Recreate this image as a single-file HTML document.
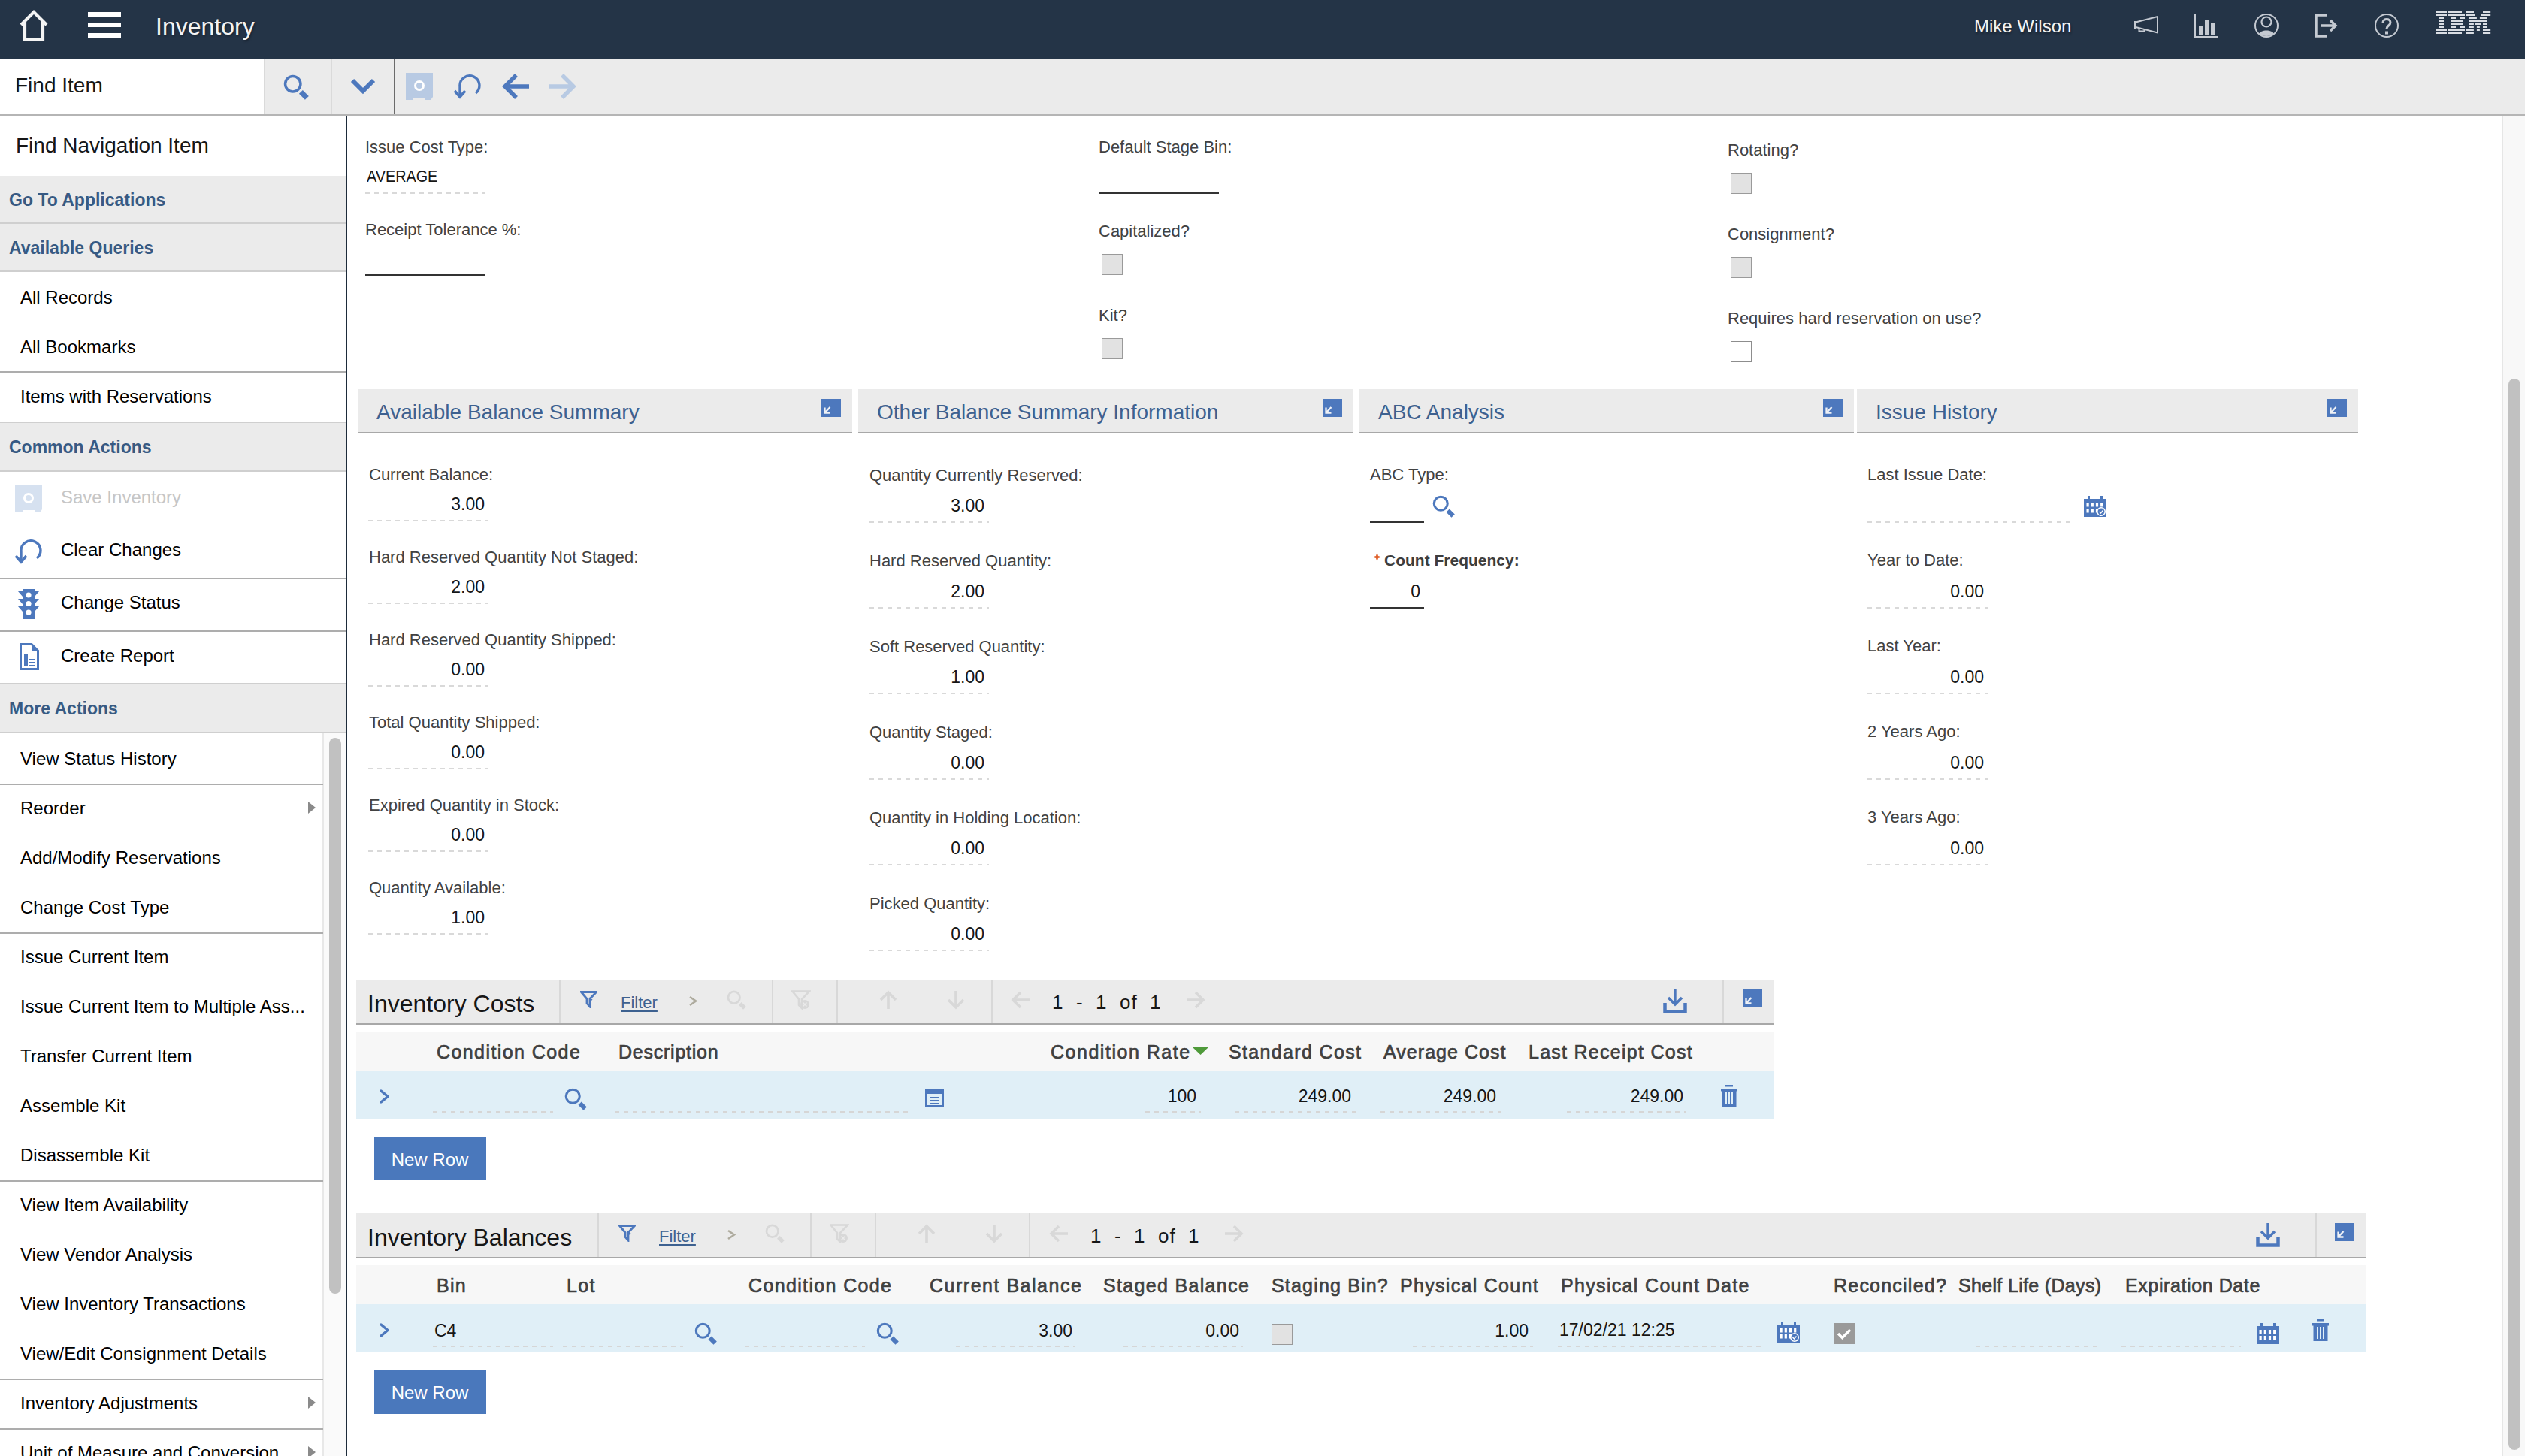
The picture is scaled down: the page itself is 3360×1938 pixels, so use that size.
<!DOCTYPE html>
<html><head><meta charset="utf-8"><title>Inventory</title>
<style>
html,body{margin:0;padding:0;}
body{width:3360px;height:1938px;overflow:hidden;position:relative;background:#fff;font-family:'Liberation Sans', sans-serif;}
.t{position:absolute;white-space:nowrap;font-family:'Liberation Sans', sans-serif;}
.r{position:absolute;display:block;box-sizing:content-box;}
</style></head><body>
<div class="r" style="left:0px;top:0px;width:3360px;height:78px;background:#243447;"></div>
<svg class="r" style="left:24px;top:12px" width="42" height="44" viewBox="0 0 42 44"><path d="M4 21 L21 4 L38 21 M9 17 V40 H33 V17" fill="none" stroke="#f4f4f4" stroke-width="4.2" stroke-linejoin="miter"/></svg>
<div class="r" style="left:117px;top:16px;width:44px;height:6px;background:#fff;"></div>
<div class="r" style="left:117px;top:30px;width:44px;height:6px;background:#fff;"></div>
<div class="r" style="left:117px;top:44px;width:44px;height:6px;background:#fff;"></div>
<div class="t" style="top:19px;font-size:32px;line-height:32px;color:#f4f4f4;left:207px;text-shadow:1px 2px 3px rgba(0,0,0,.35);">Inventory</div>
<div class="t" style="top:23px;font-size:24px;line-height:24px;color:#f4f4f4;left:2627px;text-shadow:1px 2px 3px rgba(0,0,0,.35);">Mike Wilson</div>
<svg class="r" style="left:2840px;top:18px" width="32" height="32" viewBox="0 0 32 32"><path d="M2 11.5 L31 4 V25.5 L2 18 Z" fill="none" stroke="#c5cad2" stroke-width="2"/><path d="M1.5 10 V20" stroke="#c5cad2" stroke-width="3"/><path d="M6.5 19 V23.5 H13.5 V21" fill="none" stroke="#c5cad2" stroke-width="2"/></svg>
<svg class="r" style="left:2920px;top:18px" width="32" height="32" viewBox="0 0 32 32"><path d="M1 0 V31 H32" fill="none" stroke="#c5cad2" stroke-width="2"/><rect x="6" y="16" width="6" height="12" fill="#c5cad2"/><rect x="14" y="8" width="6" height="20" fill="#c5cad2"/><rect x="22" y="12" width="6" height="16" fill="#c5cad2"/></svg>
<svg class="r" style="left:3000px;top:18px" width="32" height="32" viewBox="0 0 32 32"><circle cx="16" cy="16" r="15" fill="none" stroke="#c5cad2" stroke-width="2"/><circle cx="16" cy="11" r="6.5" fill="none" stroke="#c5cad2" stroke-width="2.2"/><path d="M6 27 C8 21 24 21 26 27 C22 31 10 31 6 27Z" fill="#c5cad2"/></svg>
<svg class="r" style="left:3080px;top:18px" width="32" height="32" viewBox="0 0 32 32"><path d="M16 2 H2 V30 H16" fill="none" stroke="#c5cad2" stroke-width="3.5"/><path d="M8 16 H28 M21 9 L28 16 L21 23" fill="none" stroke="#c5cad2" stroke-width="3.5"/></svg>
<svg class="r" style="left:3160px;top:18px" width="32" height="32" viewBox="0 0 32 32"><circle cx="16" cy="16" r="15" fill="none" stroke="#c5cad2" stroke-width="2"/><path d="M11 12 C11 6 21 6 21 12 C21 16 16 16 16 20 V21" fill="none" stroke="#c5cad2" stroke-width="3"/><rect x="14" y="23.5" width="4" height="4" fill="#c5cad2"/></svg>
<svg class="r" style="left:3236px;top:10px" width="84" height="40" viewBox="0 0 84 40"><rect x="6" y="4.8" width="14.0" height="2.2" fill="#d9dde3"/><rect x="22" y="4.8" width="18.0" height="2.2" fill="#d9dde3"/><rect x="45.8" y="4.8" width="10.2" height="2.2" fill="#d9dde3"/><rect x="68" y="4.8" width="10.2" height="2.2" fill="#d9dde3"/><rect x="6" y="8.8" width="14.0" height="2.2" fill="#d9dde3"/><rect x="22" y="8.8" width="22.0" height="2.2" fill="#d9dde3"/><rect x="45.8" y="8.8" width="12.1" height="2.2" fill="#d9dde3"/><rect x="65.9" y="8.8" width="12.3" height="2.2" fill="#d9dde3"/><rect x="9.9" y="12.8" width="6.1" height="2.2" fill="#d9dde3"/><rect x="25.9" y="12.8" width="6.1" height="2.2" fill="#d9dde3"/><rect x="38" y="12.8" width="6.0" height="2.2" fill="#d9dde3"/><rect x="49.9" y="12.8" width="10.0" height="2.2" fill="#d9dde3"/><rect x="63.9" y="12.8" width="10.0" height="2.2" fill="#d9dde3"/><rect x="9.9" y="16.8" width="6.1" height="2.2" fill="#d9dde3"/><rect x="25.9" y="16.8" width="16.0" height="2.2" fill="#d9dde3"/><rect x="49.9" y="16.8" width="24.0" height="2.2" fill="#d9dde3"/><rect x="9.9" y="20.8" width="6.1" height="2.2" fill="#d9dde3"/><rect x="25.9" y="20.8" width="16.0" height="2.2" fill="#d9dde3"/><rect x="49.9" y="20.8" width="6.0" height="2.2" fill="#d9dde3"/><rect x="57.9" y="20.8" width="8.0" height="2.2" fill="#d9dde3"/><rect x="68" y="20.8" width="5.9" height="2.2" fill="#d9dde3"/><rect x="9.9" y="24.8" width="6.1" height="2.2" fill="#d9dde3"/><rect x="25.9" y="24.8" width="6.1" height="2.2" fill="#d9dde3"/><rect x="38" y="24.8" width="6.0" height="2.2" fill="#d9dde3"/><rect x="49.9" y="24.8" width="6.0" height="2.2" fill="#d9dde3"/><rect x="59.9" y="24.8" width="4.0" height="2.2" fill="#d9dde3"/><rect x="68" y="24.8" width="5.9" height="2.2" fill="#d9dde3"/><rect x="6" y="28.8" width="14.0" height="2.2" fill="#d9dde3"/><rect x="22" y="28.8" width="22.0" height="2.2" fill="#d9dde3"/><rect x="45.8" y="28.8" width="10.1" height="2.2" fill="#d9dde3"/><rect x="59.9" y="28.8" width="4.0" height="2.2" fill="#d9dde3"/><rect x="68" y="28.8" width="10.2" height="2.2" fill="#d9dde3"/><rect x="6" y="32.8" width="14.0" height="2.2" fill="#d9dde3"/><rect x="22" y="32.8" width="18.0" height="2.2" fill="#d9dde3"/><rect x="45.8" y="32.8" width="10.1" height="2.2" fill="#d9dde3"/><rect x="68" y="32.8" width="10.2" height="2.2" fill="#d9dde3"/></svg>
<div class="r" style="left:0px;top:78px;width:3360px;height:74px;background:#ebebeb;"></div>
<div class="r" style="left:0px;top:152px;width:3360px;height:2px;background:#b5b5b5;"></div>
<div class="r" style="left:0px;top:78px;width:351px;height:74px;background:#fff;"></div>
<div class="r" style="left:351px;top:78px;width:2px;height:74px;background:#dadada;"></div>
<div class="r" style="left:440px;top:78px;width:2px;height:74px;background:#dadada;"></div>
<div class="r" style="left:524px;top:78px;width:2px;height:74px;background:#6b6b6b;"></div>
<div class="t" style="top:100px;font-size:28px;line-height:28px;color:#161616;left:20px;">Find Item</div>
<svg class="r" style="left:377px;top:99px" width="34" height="34" viewBox="0 0 34 34"><g transform="scale(1.0625)"><circle cx="12" cy="12" r="9.6" fill="none" stroke="#4d78bd" stroke-width="3.3"/><path d="M22 22 L29.5 29.5" stroke="#4d78bd" stroke-width="6.5"/></g></svg>
<svg class="r" style="left:465px;top:102px" width="36" height="26" viewBox="0 0 36 26"><path d="M4 5 L18 19 L32 5" fill="none" stroke="#4d78bd" stroke-width="6"/></svg>
<svg class="r" style="left:540px;top:97px" width="36" height="36" viewBox="0 0 36 36"><path d="M0 0 H36 V32 L33 36 H26 V33 H10 V36 H0 Z" fill="#b8cae3"/><circle cx="18" cy="17" r="5.5" fill="none" stroke="#fff" stroke-width="3"/></svg>
<svg class="r" style="left:603px;top:97px" width="38" height="36" viewBox="0 0 38 36"><path d="M30 27 A13 13 0 1 0 9 18 V32" fill="none" stroke="#4d78bd" stroke-width="3.4"/><path d="M2 24 L9 32 L16 24" fill="none" stroke="#4d78bd" stroke-width="3.6"/></svg>
<svg class="r" style="left:668px;top:97px" width="36" height="36" viewBox="0 0 36 36"><path d="M36 18 H5 M19 3 L4 18 L19 33" fill="none" stroke="#4d78bd" stroke-width="5.5"/></svg>
<svg class="r" style="left:731px;top:97px" width="37" height="36" viewBox="0 0 37 36"><path d="M0 18 H31 M17 3 L32 18 L17 33" fill="none" stroke="#b8cae3" stroke-width="5.5"/></svg>
<div class="r" style="left:460px;top:154px;width:2px;height:1784px;background:#1d2b3a;"></div>
<div class="t" style="top:180px;font-size:28px;line-height:28px;color:#161616;left:21px;">Find Navigation Item</div>
<div class="r" style="left:0px;top:234px;width:460px;height:62px;background:#ebebeb;"></div>
<div class="r" style="left:0px;top:296px;width:460px;height:2px;background:#cfcfcf;"></div>
<div class="t" style="top:255px;font-size:23px;line-height:23px;color:#375a83;font-weight:bold;left:12px;">Go To Applications</div>
<div class="r" style="left:0px;top:298px;width:460px;height:62px;background:#ebebeb;"></div>
<div class="r" style="left:0px;top:360px;width:460px;height:2px;background:#cfcfcf;"></div>
<div class="t" style="top:319px;font-size:23px;line-height:23px;color:#375a83;font-weight:bold;left:12px;">Available Queries</div>
<div class="t" style="top:384px;font-size:24px;line-height:24px;color:#000;left:27px;">All Records</div>
<div class="t" style="top:450px;font-size:24px;line-height:24px;color:#000;left:27px;">All Bookmarks</div>
<div class="r" style="left:0px;top:494px;width:460px;height:2px;background:#adadad;"></div>
<div class="t" style="top:516px;font-size:24px;line-height:24px;color:#000;left:27px;">Items with Reservations</div>
<div class="r" style="left:0px;top:562px;width:460px;height:2px;background:#cfcfcf;"></div>
<div class="r" style="left:0px;top:563px;width:460px;height:63px;background:#ebebeb;"></div>
<div class="r" style="left:0px;top:626px;width:460px;height:2px;background:#cfcfcf;"></div>
<div class="t" style="top:584px;font-size:23px;line-height:23px;color:#375a83;font-weight:bold;left:12px;">Common Actions</div>
<div class="t" style="top:650px;font-size:24px;line-height:24px;color:#c6c6c6;left:81px;">Save Inventory</div>
<svg class="r" style="left:20px;top:646px" width="36" height="36" viewBox="0 0 36 36"><path d="M0 0 H36 V32 L33 36 H26 V33 H10 V36 H0 Z" fill="#d6e1f0"/><circle cx="18" cy="17" r="5.5" fill="none" stroke="#fff" stroke-width="3"/></svg>
<div class="t" style="top:720px;font-size:24px;line-height:24px;color:#000;left:81px;">Clear Changes</div>
<svg class="r" style="left:19px;top:716px" width="38" height="36" viewBox="0 0 38 36"><path d="M30 27 A13 13 0 1 0 9 18 V32" fill="none" stroke="#4d78bd" stroke-width="3.4"/><path d="M2 24 L9 32 L16 24" fill="none" stroke="#4d78bd" stroke-width="3.6"/></svg>
<div class="r" style="left:0px;top:769px;width:460px;height:2px;background:#adadad;"></div>
<div class="t" style="top:790px;font-size:24px;line-height:24px;color:#000;left:81px;">Change Status</div>
<svg class="r" style="left:24px;top:784px" width="28" height="40" viewBox="0 0 28 40"><path d="M6 0 H22 V3 H28 L22 10 V13 H28 L22 20 V23 H28 L22 30 V40 H6 V30 L0 23 H6 V20 L0 13 H6 V10 L0 3 H6 Z" fill="#4d78bd"/><circle cx="14" cy="8" r="3.6" fill="#fff"/><circle cx="14" cy="19.5" r="3.6" fill="#fff"/><circle cx="14" cy="31" r="3.6" fill="#fff"/></svg>
<div class="r" style="left:0px;top:839px;width:460px;height:2px;background:#adadad;"></div>
<div class="t" style="top:861px;font-size:24px;line-height:24px;color:#000;left:81px;">Create Report</div>
<svg class="r" style="left:26px;top:856px" width="26" height="36" viewBox="0 0 26 36"><path d="M1.5 1.5 H16 L24.5 10 V34.5 H1.5 Z" fill="none" stroke="#4d78bd" stroke-width="3"/><path d="M16 1 V10 H25 Z" fill="#4d78bd"/><rect x="6" y="15" width="5" height="15" fill="#4d78bd"/><rect x="13" y="21" width="7" height="2" fill="#4d78bd"/><rect x="13" y="25" width="7" height="2" fill="#4d78bd"/><rect x="13" y="29" width="7" height="2" fill="#4d78bd"/></svg>
<div class="r" style="left:0px;top:909px;width:460px;height:2px;background:#cfcfcf;"></div>
<div class="r" style="left:0px;top:911px;width:460px;height:63px;background:#ebebeb;"></div>
<div class="r" style="left:0px;top:974px;width:460px;height:2px;background:#cfcfcf;"></div>
<div class="t" style="top:932px;font-size:23px;line-height:23px;color:#375a83;font-weight:bold;left:12px;">More Actions</div>
<div class="r" style="left:430px;top:976px;width:30px;height:986px;background:#fafafa;"></div>
<div class="r" style="left:429px;top:976px;width:2px;height:986px;background:#e8e8e8;"></div>
<div class="r" style="left:438px;top:982px;width:16px;height:740px;background:#c1c1c1;border-radius:8px;"></div>
<div class="t" style="top:998px;font-size:24px;line-height:24px;color:#000;left:27px;">View Status History</div>
<div class="r" style="left:0px;top:1043px;width:430px;height:2px;background:#adadad;"></div>
<div class="t" style="top:1064px;font-size:24px;line-height:24px;color:#000;left:27px;">Reorder</div>
<svg class="r" style="left:410px;top:1067px" width="10" height="16" viewBox="0 0 10 16"><path d="M0 0 L10 8 L0 16 Z" fill="#8a8a8a"/></svg>
<div class="t" style="top:1130px;font-size:24px;line-height:24px;color:#000;left:27px;">Add/Modify Reservations</div>
<div class="t" style="top:1196px;font-size:24px;line-height:24px;color:#000;left:27px;">Change Cost Type</div>
<div class="r" style="left:0px;top:1241px;width:430px;height:2px;background:#adadad;"></div>
<div class="t" style="top:1262px;font-size:24px;line-height:24px;color:#000;left:27px;">Issue Current Item</div>
<div class="t" style="top:1328px;font-size:24px;line-height:24px;color:#000;left:27px;">Issue Current Item to Multiple Ass...</div>
<div class="t" style="top:1394px;font-size:24px;line-height:24px;color:#000;left:27px;">Transfer Current Item</div>
<div class="t" style="top:1460px;font-size:24px;line-height:24px;color:#000;left:27px;">Assemble Kit</div>
<div class="t" style="top:1526px;font-size:24px;line-height:24px;color:#000;left:27px;">Disassemble Kit</div>
<div class="r" style="left:0px;top:1571px;width:430px;height:2px;background:#adadad;"></div>
<div class="t" style="top:1592px;font-size:24px;line-height:24px;color:#000;left:27px;">View Item Availability</div>
<div class="t" style="top:1658px;font-size:24px;line-height:24px;color:#000;left:27px;">View Vendor Analysis</div>
<div class="t" style="top:1724px;font-size:24px;line-height:24px;color:#000;left:27px;">View Inventory Transactions</div>
<div class="t" style="top:1790px;font-size:24px;line-height:24px;color:#000;left:27px;">View/Edit Consignment Details</div>
<div class="r" style="left:0px;top:1835px;width:430px;height:2px;background:#adadad;"></div>
<div class="t" style="top:1856px;font-size:24px;line-height:24px;color:#000;left:27px;">Inventory Adjustments</div>
<svg class="r" style="left:410px;top:1859px" width="10" height="16" viewBox="0 0 10 16"><path d="M0 0 L10 8 L0 16 Z" fill="#8a8a8a"/></svg>
<div class="r" style="left:0px;top:1901px;width:430px;height:2px;background:#adadad;"></div>
<div class="t" style="top:1922px;font-size:24px;line-height:24px;color:#000;left:27px;">Unit of Measure and Conversion</div>
<svg class="r" style="left:410px;top:1925px" width="10" height="16" viewBox="0 0 10 16"><path d="M0 0 L10 8 L0 16 Z" fill="#8a8a8a"/></svg>
<div class="r" style="left:3330px;top:154px;width:30px;height:1784px;background:#f8f8f8;"></div>
<div class="r" style="left:3329px;top:154px;width:2px;height:1784px;background:#e6e6e6;"></div>
<div class="r" style="left:3338px;top:504px;width:16px;height:1426px;background:#c1c1c1;border-radius:8px;"></div>
<div class="t" style="top:185px;font-size:22px;line-height:22px;color:#424242;left:486px;">Issue Cost Type:</div>
<div class="t" style="top:224px;font-size:22px;line-height:22px;color:#161616;left:488px;transform:scaleX(0.9);transform-origin:0 0;">AVERAGE</div>
<div class="r" style="left:486px;top:256px;width:160px;height:2px;background:repeating-linear-gradient(90deg,#d9d9d9 0 6px,transparent 6px 12px);"></div>
<div class="t" style="top:295px;font-size:22px;line-height:22px;color:#424242;left:486px;">Receipt Tolerance %:</div>
<div class="r" style="left:486px;top:365px;width:160px;height:2px;background:#333;"></div>
<div class="t" style="top:185px;font-size:22px;line-height:22px;color:#424242;left:1462px;">Default Stage Bin:</div>
<div class="r" style="left:1462px;top:256px;width:160px;height:2px;background:#333;"></div>
<div class="t" style="top:297px;font-size:22px;line-height:22px;color:#424242;left:1462px;">Capitalized?</div>
<div class="r" style="left:1466px;top:338px;width:26px;height:26px;background:#e2e2e2;border:1px solid #9a9a9a;"></div>
<div class="t" style="top:409px;font-size:22px;line-height:22px;color:#424242;left:1462px;">Kit?</div>
<div class="r" style="left:1466px;top:450px;width:26px;height:26px;background:#e2e2e2;border:1px solid #9a9a9a;"></div>
<div class="t" style="top:189px;font-size:22px;line-height:22px;color:#424242;left:2299px;">Rotating?</div>
<div class="r" style="left:2303px;top:230px;width:26px;height:26px;background:#e2e2e2;border:1px solid #9a9a9a;"></div>
<div class="t" style="top:301px;font-size:22px;line-height:22px;color:#424242;left:2299px;">Consignment?</div>
<div class="r" style="left:2303px;top:342px;width:26px;height:26px;background:#e2e2e2;border:1px solid #9a9a9a;"></div>
<div class="t" style="top:413px;font-size:22px;line-height:22px;color:#424242;left:2299px;">Requires hard reservation on use?</div>
<div class="r" style="left:2303px;top:454px;width:26px;height:26px;background:#fff;border:1px solid #8d8d8d;"></div>
<div class="r" style="left:476px;top:518px;width:658px;height:57px;background:#ebebeb;"></div>
<div class="r" style="left:476px;top:575px;width:658px;height:2px;background:#a8a8a8;"></div>
<div class="t" style="top:535px;font-size:28px;line-height:28px;color:#3d6190;left:501px;">Available Balance Summary</div>
<svg class="r" style="left:1093px;top:531px" width="26" height="24" viewBox="0 0 26 24"><rect width="26" height="24" fill="#4d78bd"/><path d="M4.5 11.5 V18.5 H11.5 M4.8 18.2 L11.5 11" fill="none" stroke="#eef1f6" stroke-width="2.3"/></svg>
<div class="r" style="left:1142px;top:518px;width:659px;height:57px;background:#ebebeb;"></div>
<div class="r" style="left:1142px;top:575px;width:659px;height:2px;background:#a8a8a8;"></div>
<div class="t" style="top:535px;font-size:28px;line-height:28px;color:#3d6190;left:1167px;">Other Balance Summary Information</div>
<svg class="r" style="left:1760px;top:531px" width="26" height="24" viewBox="0 0 26 24"><rect width="26" height="24" fill="#4d78bd"/><path d="M4.5 11.5 V18.5 H11.5 M4.8 18.2 L11.5 11" fill="none" stroke="#eef1f6" stroke-width="2.3"/></svg>
<div class="r" style="left:1809px;top:518px;width:658px;height:57px;background:#ebebeb;"></div>
<div class="r" style="left:1809px;top:575px;width:658px;height:2px;background:#a8a8a8;"></div>
<div class="t" style="top:535px;font-size:28px;line-height:28px;color:#3d6190;left:1834px;">ABC Analysis</div>
<svg class="r" style="left:2426px;top:531px" width="26" height="24" viewBox="0 0 26 24"><rect width="26" height="24" fill="#4d78bd"/><path d="M4.5 11.5 V18.5 H11.5 M4.8 18.2 L11.5 11" fill="none" stroke="#eef1f6" stroke-width="2.3"/></svg>
<div class="r" style="left:2471px;top:518px;width:667px;height:57px;background:#ebebeb;"></div>
<div class="r" style="left:2471px;top:575px;width:667px;height:2px;background:#a8a8a8;"></div>
<div class="t" style="top:535px;font-size:28px;line-height:28px;color:#3d6190;left:2496px;">Issue History</div>
<svg class="r" style="left:3097px;top:531px" width="26" height="24" viewBox="0 0 26 24"><rect width="26" height="24" fill="#4d78bd"/><path d="M4.5 11.5 V18.5 H11.5 M4.8 18.2 L11.5 11" fill="none" stroke="#eef1f6" stroke-width="2.3"/></svg>
<div class="t" style="top:621px;font-size:22px;line-height:22px;color:#424242;left:491px;">Current Balance:</div>
<div class="t" style="top:660px;font-size:23px;line-height:23px;color:#161616;right:2715px;text-align:right;">3.00</div>
<div class="r" style="left:490px;top:692px;width:160px;height:2px;background:repeating-linear-gradient(90deg,#d9d9d9 0 6px,transparent 6px 12px);"></div>
<div class="t" style="top:731px;font-size:22px;line-height:22px;color:#424242;left:491px;">Hard Reserved Quantity Not Staged:</div>
<div class="t" style="top:770px;font-size:23px;line-height:23px;color:#161616;right:2715px;text-align:right;">2.00</div>
<div class="r" style="left:490px;top:802px;width:160px;height:2px;background:repeating-linear-gradient(90deg,#d9d9d9 0 6px,transparent 6px 12px);"></div>
<div class="t" style="top:841px;font-size:22px;line-height:22px;color:#424242;left:491px;">Hard Reserved Quantity Shipped:</div>
<div class="t" style="top:880px;font-size:23px;line-height:23px;color:#161616;right:2715px;text-align:right;">0.00</div>
<div class="r" style="left:490px;top:912px;width:160px;height:2px;background:repeating-linear-gradient(90deg,#d9d9d9 0 6px,transparent 6px 12px);"></div>
<div class="t" style="top:951px;font-size:22px;line-height:22px;color:#424242;left:491px;">Total Quantity Shipped:</div>
<div class="t" style="top:990px;font-size:23px;line-height:23px;color:#161616;right:2715px;text-align:right;">0.00</div>
<div class="r" style="left:490px;top:1022px;width:160px;height:2px;background:repeating-linear-gradient(90deg,#d9d9d9 0 6px,transparent 6px 12px);"></div>
<div class="t" style="top:1061px;font-size:22px;line-height:22px;color:#424242;left:491px;">Expired Quantity in Stock:</div>
<div class="t" style="top:1100px;font-size:23px;line-height:23px;color:#161616;right:2715px;text-align:right;">0.00</div>
<div class="r" style="left:490px;top:1132px;width:160px;height:2px;background:repeating-linear-gradient(90deg,#d9d9d9 0 6px,transparent 6px 12px);"></div>
<div class="t" style="top:1171px;font-size:22px;line-height:22px;color:#424242;left:491px;">Quantity Available:</div>
<div class="t" style="top:1210px;font-size:23px;line-height:23px;color:#161616;right:2715px;text-align:right;">1.00</div>
<div class="r" style="left:490px;top:1242px;width:160px;height:2px;background:repeating-linear-gradient(90deg,#d9d9d9 0 6px,transparent 6px 12px);"></div>
<div class="t" style="top:622px;font-size:22px;line-height:22px;color:#424242;left:1157px;">Quantity Currently Reserved:</div>
<div class="t" style="top:662px;font-size:23px;line-height:23px;color:#161616;right:2050px;text-align:right;">3.00</div>
<div class="r" style="left:1157px;top:694px;width:159px;height:2px;background:repeating-linear-gradient(90deg,#d9d9d9 0 6px,transparent 6px 12px);"></div>
<div class="t" style="top:736px;font-size:22px;line-height:22px;color:#424242;left:1157px;">Hard Reserved Quantity:</div>
<div class="t" style="top:776px;font-size:23px;line-height:23px;color:#161616;right:2050px;text-align:right;">2.00</div>
<div class="r" style="left:1157px;top:808px;width:159px;height:2px;background:repeating-linear-gradient(90deg,#d9d9d9 0 6px,transparent 6px 12px);"></div>
<div class="t" style="top:850px;font-size:22px;line-height:22px;color:#424242;left:1157px;">Soft Reserved Quantity:</div>
<div class="t" style="top:890px;font-size:23px;line-height:23px;color:#161616;right:2050px;text-align:right;">1.00</div>
<div class="r" style="left:1157px;top:922px;width:159px;height:2px;background:repeating-linear-gradient(90deg,#d9d9d9 0 6px,transparent 6px 12px);"></div>
<div class="t" style="top:964px;font-size:22px;line-height:22px;color:#424242;left:1157px;">Quantity Staged:</div>
<div class="t" style="top:1004px;font-size:23px;line-height:23px;color:#161616;right:2050px;text-align:right;">0.00</div>
<div class="r" style="left:1157px;top:1036px;width:159px;height:2px;background:repeating-linear-gradient(90deg,#d9d9d9 0 6px,transparent 6px 12px);"></div>
<div class="t" style="top:1078px;font-size:22px;line-height:22px;color:#424242;left:1157px;">Quantity in Holding Location:</div>
<div class="t" style="top:1118px;font-size:23px;line-height:23px;color:#161616;right:2050px;text-align:right;">0.00</div>
<div class="r" style="left:1157px;top:1150px;width:159px;height:2px;background:repeating-linear-gradient(90deg,#d9d9d9 0 6px,transparent 6px 12px);"></div>
<div class="t" style="top:1192px;font-size:22px;line-height:22px;color:#424242;left:1157px;">Picked Quantity:</div>
<div class="t" style="top:1232px;font-size:23px;line-height:23px;color:#161616;right:2050px;text-align:right;">0.00</div>
<div class="r" style="left:1157px;top:1264px;width:159px;height:2px;background:repeating-linear-gradient(90deg,#d9d9d9 0 6px,transparent 6px 12px);"></div>
<div class="t" style="top:621px;font-size:22px;line-height:22px;color:#424242;left:1823px;">ABC Type:</div>
<div class="r" style="left:1823px;top:694px;width:72px;height:2px;background:#333;"></div>
<svg class="r" style="left:1906px;top:659px" width="30" height="30" viewBox="0 0 30 30"><g transform="scale(0.9375)"><circle cx="12" cy="12" r="9.6" fill="none" stroke="#4d78bd" stroke-width="3.3"/><path d="M22 22 L29.5 29.5" stroke="#4d78bd" stroke-width="6.5"/></g></svg>
<svg class="r" style="left:1826px;top:735px" width="13" height="13" viewBox="0 0 13 13"><path d="M6.5 0 L8 5 L13 6.5 L8 8 L6.5 13 L5 8 L0 6.5 L5 5 Z" fill="#e0612b"/></svg>
<div class="t" style="top:735px;font-size:21px;line-height:21px;color:#3d3d3d;font-weight:bold;left:1842px;">Count Frequency:</div>
<div class="t" style="top:776px;font-size:23px;line-height:23px;color:#161616;right:1470px;text-align:right;">0</div>
<div class="r" style="left:1823px;top:808px;width:72px;height:2px;background:#333;"></div>
<div class="t" style="top:621px;font-size:22px;line-height:22px;color:#424242;left:2485px;">Last Issue Date:</div>
<div class="r" style="left:2485px;top:694px;width:273px;height:2px;background:repeating-linear-gradient(90deg,#d9d9d9 0 6px,transparent 6px 12px);"></div>
<svg class="r" style="left:2773px;top:660px" width="30" height="28" viewBox="0 0 30 28"><rect x="0" y="4" width="30" height="24" fill="#4d78bd"/><rect x="5" y="0" width="3" height="6" fill="#4d78bd"/><rect x="22" y="0" width="3" height="6" fill="#4d78bd"/><rect x="3.5" y="9" width="3.2" height="5.5" fill="#fff"/><rect x="9.7" y="9" width="3.2" height="5.5" fill="#fff"/><rect x="15.9" y="9" width="3.2" height="5.5" fill="#fff"/><rect x="22.1" y="9" width="3.2" height="5.5" fill="#fff"/><rect x="3.5" y="17" width="3.2" height="5.5" fill="#fff"/><rect x="9.7" y="17" width="3.2" height="5.5" fill="#fff"/><rect x="15.9" y="17" width="3.2" height="5.5" fill="#fff"/><rect x="22.1" y="17" width="3.2" height="5.5" fill="#fff"/><circle cx="23" cy="21" r="6" fill="#fff"/><circle cx="23" cy="21" r="4.5" fill="#4d78bd"/><path d="M20.5 21 L22.5 23 L25.5 19.5" fill="none" stroke="#fff" stroke-width="1.5"/></svg>
<div class="t" style="top:735px;font-size:22px;line-height:22px;color:#424242;left:2485px;">Year to Date:</div>
<div class="t" style="top:776px;font-size:23px;line-height:23px;color:#161616;right:720px;text-align:right;">0.00</div>
<div class="r" style="left:2485px;top:808px;width:160px;height:2px;background:repeating-linear-gradient(90deg,#d9d9d9 0 6px,transparent 6px 12px);"></div>
<div class="t" style="top:849px;font-size:22px;line-height:22px;color:#424242;left:2485px;">Last Year:</div>
<div class="t" style="top:890px;font-size:23px;line-height:23px;color:#161616;right:720px;text-align:right;">0.00</div>
<div class="r" style="left:2485px;top:922px;width:160px;height:2px;background:repeating-linear-gradient(90deg,#d9d9d9 0 6px,transparent 6px 12px);"></div>
<div class="t" style="top:963px;font-size:22px;line-height:22px;color:#424242;left:2485px;">2 Years Ago:</div>
<div class="t" style="top:1004px;font-size:23px;line-height:23px;color:#161616;right:720px;text-align:right;">0.00</div>
<div class="r" style="left:2485px;top:1036px;width:160px;height:2px;background:repeating-linear-gradient(90deg,#d9d9d9 0 6px,transparent 6px 12px);"></div>
<div class="t" style="top:1077px;font-size:22px;line-height:22px;color:#424242;left:2485px;">3 Years Ago:</div>
<div class="t" style="top:1118px;font-size:23px;line-height:23px;color:#161616;right:720px;text-align:right;">0.00</div>
<div class="r" style="left:2485px;top:1150px;width:160px;height:2px;background:repeating-linear-gradient(90deg,#d9d9d9 0 6px,transparent 6px 12px);"></div>
<div class="r" style="left:474px;top:1304px;width:1886px;height:58px;background:#ebebeb;"></div>
<div class="r" style="left:474px;top:1362px;width:1886px;height:2px;background:#a8a8a8;"></div>
<div class="r" style="left:744px;top:1304px;width:2px;height:58px;background:#d8d8d8;"></div>
<div class="r" style="left:1027px;top:1304px;width:2px;height:58px;background:#d8d8d8;"></div>
<div class="r" style="left:1113px;top:1304px;width:2px;height:58px;background:#d8d8d8;"></div>
<div class="r" style="left:1319px;top:1304px;width:2px;height:58px;background:#d8d8d8;"></div>
<div class="r" style="left:2292px;top:1304px;width:2px;height:58px;background:#d8d8d8;"></div>
<div class="t" style="top:1320px;font-size:32px;line-height:32px;color:#161616;left:489px;">Inventory Costs</div>
<svg class="r" style="left:772px;top:1319px" width="23" height="23" viewBox="0 0 23 23"><path d="M1.5 1.5 H21.5 L13 10.5 V21 L9 16.5 V10.5 Z" fill="none" stroke="#4d78bd" stroke-width="2.8"/><path d="M12 8.5 L16.5 11.5 L12 16 Z" fill="#4d78bd"/></svg>
<div class="t" style="top:1324px;font-size:22px;line-height:22px;color:#3d6190;left:826px;text-decoration:underline;text-underline-offset:3px;text-decoration-thickness:1.6px;">Filter</div>
<svg class="r" style="left:916px;top:1325px" width="13" height="15" viewBox="0 0 13 15"><path d="M2 2 L10 7.5 L2 13" fill="none" stroke="#aeab9e" stroke-width="2.6"/></svg>
<svg class="r" style="left:967px;top:1318px" width="26" height="26" viewBox="0 0 26 26"><g transform="scale(0.8125)"><circle cx="12" cy="12" r="9.6" fill="none" stroke="#d8d8d8" stroke-width="3.3"/><path d="M22 22 L29.5 29.5" stroke="#d8d8d8" stroke-width="6.5"/></g></svg>
<svg class="r" style="left:1053px;top:1318px" width="26" height="26" viewBox="0 0 26 26"><path d="M1.5 1.5 H24 L14 12 V24 L10 20 V12 Z" fill="none" stroke="#d8d8d8" stroke-width="2.6"/><circle cx="18" cy="19" r="6" fill="#d8d8d8"/><path d="M15.5 16.5 L20.5 21.5 M20.5 16.5 L15.5 21.5" stroke="#ebebeb" stroke-width="1.5"/></svg>
<svg class="r" style="left:1169px;top:1318px" width="26" height="26" viewBox="0 0 26 26"><path d="M13 25 V3 M3 13 L13 3 L23 13" fill="none" stroke="#d8d8d8" stroke-width="3.6"/></svg>
<svg class="r" style="left:1259px;top:1318px" width="26" height="26" viewBox="0 0 26 26"><path d="M13 1 V23 M3 13 L13 23 L23 13" fill="none" stroke="#d8d8d8" stroke-width="3.6"/></svg>
<svg class="r" style="left:1345px;top:1318px" width="26" height="26" viewBox="0 0 26 26"><path d="M25 13 H3 M13 3 L3 13 L13 23" fill="none" stroke="#d8d8d8" stroke-width="3.6"/></svg>
<div class="t" style="top:1321px;font-size:26px;line-height:26px;color:#161616;left:1400px;letter-spacing:1px;">1&nbsp; -&nbsp; 1&nbsp; of&nbsp; 1</div>
<svg class="r" style="left:1578px;top:1318px" width="26" height="26" viewBox="0 0 26 26"><path d="M1 13 H23 M13 3 L23 13 L13 23" fill="none" stroke="#d8d8d8" stroke-width="3.6"/></svg>
<svg class="r" style="left:2213px;top:1317px" width="32" height="32" viewBox="0 0 32 32"><path d="M16 0 V20 M7 11 L16 20 L25 11" fill="none" stroke="#4d78bd" stroke-width="3.4"/><path d="M2.5 18 V29.5 H29.5 V18" fill="none" stroke="#4d78bd" stroke-width="4.5"/></svg>
<svg class="r" style="left:2319px;top:1317px" width="26" height="24" viewBox="0 0 26 24"><rect width="26" height="24" fill="#4d78bd"/><path d="M4.5 11.5 V18.5 H11.5 M4.8 18.2 L11.5 11" fill="none" stroke="#eef1f6" stroke-width="2.3"/></svg>
<div class="r" style="left:474px;top:1373px;width:1886px;height:52px;background:#f7f7f7;"></div>
<div class="t" style="top:1388px;font-size:25px;line-height:25px;color:#404040;left:581px;letter-spacing:1.42px;-webkit-text-stroke:0.7px #404040;">Condition Code</div>
<div class="t" style="top:1388px;font-size:25px;line-height:25px;color:#404040;left:823px;letter-spacing:0.76px;-webkit-text-stroke:0.7px #404040;">Description</div>
<div class="t" style="top:1388px;font-size:25px;line-height:25px;color:#404040;left:1398px;letter-spacing:1.52px;-webkit-text-stroke:0.7px #404040;">Condition Rate</div>
<div class="t" style="top:1388px;font-size:25px;line-height:25px;color:#404040;left:1635px;letter-spacing:1.35px;-webkit-text-stroke:0.7px #404040;">Standard Cost</div>
<div class="t" style="top:1388px;font-size:25px;line-height:25px;color:#404040;left:1841px;letter-spacing:1.05px;-webkit-text-stroke:0.7px #404040;">Average Cost</div>
<div class="t" style="top:1388px;font-size:25px;line-height:25px;color:#404040;left:2034px;letter-spacing:1.27px;-webkit-text-stroke:0.7px #404040;">Last Receipt Cost</div>
<svg class="r" style="left:1587px;top:1394px" width="21" height="10" viewBox="0 0 21 10"><path d="M0 0 H21 L10.5 10 Z" fill="#4f9a3a"/></svg>
<div class="r" style="left:474px;top:1425px;width:1886px;height:64px;background:#e0eff7;"></div>
<svg class="r" style="left:505px;top:1450px" width="14" height="19" viewBox="0 0 14 19"><path d="M2 2 L11 9.5 L2 17" fill="none" stroke="#4d78bd" stroke-width="3.4" stroke-linecap="round" stroke-linejoin="round"/></svg>
<div class="r" style="left:576px;top:1479px;width:160px;height:2px;background:repeating-linear-gradient(90deg,#d6d6d6 0 6px,transparent 6px 12px);"></div>
<svg class="r" style="left:751px;top:1448px" width="30" height="30" viewBox="0 0 30 30"><g transform="scale(0.9375)"><circle cx="12" cy="12" r="9.6" fill="none" stroke="#4d78bd" stroke-width="3.3"/><path d="M22 22 L29.5 29.5" stroke="#4d78bd" stroke-width="6.5"/></g></svg>
<div class="r" style="left:818px;top:1479px;width:396px;height:2px;background:repeating-linear-gradient(90deg,#d6d6d6 0 6px,transparent 6px 12px);"></div>
<svg class="r" style="left:1231px;top:1450px" width="25" height="24" viewBox="0 0 25 24"><rect x="1.5" y="1.5" width="22" height="21" fill="none" stroke="#4d78bd" stroke-width="3"/><rect x="1" y="1" width="23" height="5" fill="#4d78bd"/><rect x="6" y="10" width="13" height="2" fill="#4d78bd"/><rect x="6" y="14" width="13" height="2" fill="#4d78bd"/><rect x="6" y="18" width="13" height="2" fill="#4d78bd"/></svg>
<div class="t" style="top:1448px;font-size:23px;line-height:23px;color:#161616;right:1768px;text-align:right;">100</div>
<div class="t" style="top:1448px;font-size:23px;line-height:23px;color:#161616;right:1562px;text-align:right;">249.00</div>
<div class="t" style="top:1448px;font-size:23px;line-height:23px;color:#161616;right:1369px;text-align:right;">249.00</div>
<div class="t" style="top:1448px;font-size:23px;line-height:23px;color:#161616;right:1120px;text-align:right;">249.00</div>
<div class="r" style="left:1524px;top:1479px;width:74px;height:2px;background:repeating-linear-gradient(90deg,#d6d6d6 0 6px,transparent 6px 12px);"></div>
<div class="r" style="left:1643px;top:1479px;width:161px;height:2px;background:repeating-linear-gradient(90deg,#d6d6d6 0 6px,transparent 6px 12px);"></div>
<div class="r" style="left:1837px;top:1479px;width:160px;height:2px;background:repeating-linear-gradient(90deg,#d6d6d6 0 6px,transparent 6px 12px);"></div>
<div class="r" style="left:2085px;top:1479px;width:159px;height:2px;background:repeating-linear-gradient(90deg,#d6d6d6 0 6px,transparent 6px 12px);"></div>
<svg class="r" style="left:2290px;top:1444px" width="22" height="29" viewBox="0 0 22 29"><rect x="6" y="0" width="10" height="2.5" fill="#4d78bd"/><path d="M0 5 H22 V8.5 H20.5 V29 H1.5 V8.5 H0 Z" fill="#4d78bd"/><rect x="6" y="10" width="2" height="16" fill="#e0eff7"/><rect x="10" y="10" width="2" height="16" fill="#e0eff7"/><rect x="14" y="10" width="2" height="16" fill="#e0eff7"/></svg>
<div class="r" style="left:498px;top:1513px;width:149px;height:58px;background:#4a78bc;"></div>
<div class="t" style="top:1532px;font-size:24px;line-height:24px;color:#fff;left:72px;width:1000px;text-align:center;">New Row</div>
<div class="r" style="left:474px;top:1615px;width:2674px;height:58px;background:#ebebeb;"></div>
<div class="r" style="left:474px;top:1673px;width:2674px;height:2px;background:#a8a8a8;"></div>
<div class="r" style="left:795px;top:1615px;width:2px;height:58px;background:#d8d8d8;"></div>
<div class="r" style="left:1078px;top:1615px;width:2px;height:58px;background:#d8d8d8;"></div>
<div class="r" style="left:1164px;top:1615px;width:2px;height:58px;background:#d8d8d8;"></div>
<div class="r" style="left:1369px;top:1615px;width:2px;height:58px;background:#d8d8d8;"></div>
<div class="r" style="left:3081px;top:1615px;width:2px;height:58px;background:#d8d8d8;"></div>
<div class="t" style="top:1631px;font-size:32px;line-height:32px;color:#161616;left:489px;">Inventory Balances</div>
<svg class="r" style="left:823px;top:1630px" width="23" height="23" viewBox="0 0 23 23"><path d="M1.5 1.5 H21.5 L13 10.5 V21 L9 16.5 V10.5 Z" fill="none" stroke="#4d78bd" stroke-width="2.8"/><path d="M12 8.5 L16.5 11.5 L12 16 Z" fill="#4d78bd"/></svg>
<div class="t" style="top:1635px;font-size:22px;line-height:22px;color:#3d6190;left:877px;text-decoration:underline;text-underline-offset:3px;text-decoration-thickness:1.6px;">Filter</div>
<svg class="r" style="left:967px;top:1636px" width="13" height="15" viewBox="0 0 13 15"><path d="M2 2 L10 7.5 L2 13" fill="none" stroke="#aeab9e" stroke-width="2.6"/></svg>
<svg class="r" style="left:1018px;top:1629px" width="26" height="26" viewBox="0 0 26 26"><g transform="scale(0.8125)"><circle cx="12" cy="12" r="9.6" fill="none" stroke="#d8d8d8" stroke-width="3.3"/><path d="M22 22 L29.5 29.5" stroke="#d8d8d8" stroke-width="6.5"/></g></svg>
<svg class="r" style="left:1104px;top:1629px" width="26" height="26" viewBox="0 0 26 26"><path d="M1.5 1.5 H24 L14 12 V24 L10 20 V12 Z" fill="none" stroke="#d8d8d8" stroke-width="2.6"/><circle cx="18" cy="19" r="6" fill="#d8d8d8"/><path d="M15.5 16.5 L20.5 21.5 M20.5 16.5 L15.5 21.5" stroke="#ebebeb" stroke-width="1.5"/></svg>
<svg class="r" style="left:1220px;top:1629px" width="26" height="26" viewBox="0 0 26 26"><path d="M13 25 V3 M3 13 L13 3 L23 13" fill="none" stroke="#d8d8d8" stroke-width="3.6"/></svg>
<svg class="r" style="left:1310px;top:1629px" width="26" height="26" viewBox="0 0 26 26"><path d="M13 1 V23 M3 13 L13 23 L23 13" fill="none" stroke="#d8d8d8" stroke-width="3.6"/></svg>
<svg class="r" style="left:1396px;top:1629px" width="26" height="26" viewBox="0 0 26 26"><path d="M25 13 H3 M13 3 L3 13 L13 23" fill="none" stroke="#d8d8d8" stroke-width="3.6"/></svg>
<div class="t" style="top:1632px;font-size:26px;line-height:26px;color:#161616;left:1451px;letter-spacing:1px;">1&nbsp; -&nbsp; 1&nbsp; of&nbsp; 1</div>
<svg class="r" style="left:1629px;top:1629px" width="26" height="26" viewBox="0 0 26 26"><path d="M1 13 H23 M13 3 L23 13 L13 23" fill="none" stroke="#d8d8d8" stroke-width="3.6"/></svg>
<svg class="r" style="left:3002px;top:1628px" width="32" height="32" viewBox="0 0 32 32"><path d="M16 0 V20 M7 11 L16 20 L25 11" fill="none" stroke="#4d78bd" stroke-width="3.4"/><path d="M2.5 18 V29.5 H29.5 V18" fill="none" stroke="#4d78bd" stroke-width="4.5"/></svg>
<svg class="r" style="left:3107px;top:1628px" width="26" height="24" viewBox="0 0 26 24"><rect width="26" height="24" fill="#4d78bd"/><path d="M4.5 11.5 V18.5 H11.5 M4.8 18.2 L11.5 11" fill="none" stroke="#eef1f6" stroke-width="2.3"/></svg>
<div class="r" style="left:474px;top:1684px;width:2674px;height:52px;background:#f7f7f7;"></div>
<div class="t" style="top:1699px;font-size:25px;line-height:25px;color:#404040;left:581px;letter-spacing:1.30px;-webkit-text-stroke:0.7px #404040;">Bin</div>
<div class="t" style="top:1699px;font-size:25px;line-height:25px;color:#404040;left:754px;letter-spacing:1.30px;-webkit-text-stroke:0.7px #404040;">Lot</div>
<div class="t" style="top:1699px;font-size:25px;line-height:25px;color:#404040;left:996px;letter-spacing:1.36px;-webkit-text-stroke:0.7px #404040;">Condition Code</div>
<div class="t" style="top:1699px;font-size:25px;line-height:25px;color:#404040;left:1237px;letter-spacing:1.51px;-webkit-text-stroke:0.7px #404040;">Current Balance</div>
<div class="t" style="top:1699px;font-size:25px;line-height:25px;color:#404040;left:1468px;letter-spacing:1.33px;-webkit-text-stroke:0.7px #404040;">Staged Balance</div>
<div class="t" style="top:1699px;font-size:25px;line-height:25px;color:#404040;left:1692px;letter-spacing:1.18px;-webkit-text-stroke:0.7px #404040;">Staging Bin?</div>
<div class="t" style="top:1699px;font-size:25px;line-height:25px;color:#404040;left:1863px;letter-spacing:1.30px;-webkit-text-stroke:0.7px #404040;">Physical Count</div>
<div class="t" style="top:1699px;font-size:25px;line-height:25px;color:#404040;left:2077px;letter-spacing:1.33px;-webkit-text-stroke:0.7px #404040;">Physical Count Date</div>
<div class="t" style="top:1699px;font-size:25px;line-height:25px;color:#404040;left:2440px;letter-spacing:1.22px;-webkit-text-stroke:0.7px #404040;">Reconciled?</div>
<div class="t" style="top:1699px;font-size:25px;line-height:25px;color:#404040;left:2606px;letter-spacing:0.33px;-webkit-text-stroke:0.7px #404040;">Shelf Life (Days)</div>
<div class="t" style="top:1699px;font-size:25px;line-height:25px;color:#404040;left:2828px;letter-spacing:0.60px;-webkit-text-stroke:0.7px #404040;">Expiration Date</div>
<div class="r" style="left:474px;top:1736px;width:2674px;height:64px;background:#e0eff7;"></div>
<svg class="r" style="left:505px;top:1761px" width="14" height="19" viewBox="0 0 14 19"><path d="M2 2 L11 9.5 L2 17" fill="none" stroke="#4d78bd" stroke-width="3.4" stroke-linecap="round" stroke-linejoin="round"/></svg>
<div class="t" style="top:1760px;font-size:23px;line-height:23px;color:#161616;left:578px;">C4</div>
<div class="r" style="left:576px;top:1791px;width:160px;height:2px;background:repeating-linear-gradient(90deg,#d6d6d6 0 6px,transparent 6px 12px);"></div>
<div class="r" style="left:749px;top:1791px;width:160px;height:2px;background:repeating-linear-gradient(90deg,#d6d6d6 0 6px,transparent 6px 12px);"></div>
<div class="r" style="left:991px;top:1791px;width:160px;height:2px;background:repeating-linear-gradient(90deg,#d6d6d6 0 6px,transparent 6px 12px);"></div>
<div class="r" style="left:1272px;top:1791px;width:159px;height:2px;background:repeating-linear-gradient(90deg,#d6d6d6 0 6px,transparent 6px 12px);"></div>
<div class="r" style="left:1495px;top:1791px;width:159px;height:2px;background:repeating-linear-gradient(90deg,#d6d6d6 0 6px,transparent 6px 12px);"></div>
<div class="r" style="left:1880px;top:1791px;width:160px;height:2px;background:repeating-linear-gradient(90deg,#d6d6d6 0 6px,transparent 6px 12px);"></div>
<div class="r" style="left:2073px;top:1791px;width:271px;height:2px;background:repeating-linear-gradient(90deg,#d6d6d6 0 6px,transparent 6px 12px);"></div>
<div class="r" style="left:2629px;top:1791px;width:161px;height:2px;background:repeating-linear-gradient(90deg,#d6d6d6 0 6px,transparent 6px 12px);"></div>
<div class="r" style="left:2823px;top:1791px;width:159px;height:2px;background:repeating-linear-gradient(90deg,#d6d6d6 0 6px,transparent 6px 12px);"></div>
<svg class="r" style="left:924px;top:1760px" width="30" height="30" viewBox="0 0 30 30"><g transform="scale(0.9375)"><circle cx="12" cy="12" r="9.6" fill="none" stroke="#4d78bd" stroke-width="3.3"/><path d="M22 22 L29.5 29.5" stroke="#4d78bd" stroke-width="6.5"/></g></svg>
<svg class="r" style="left:1166px;top:1760px" width="30" height="30" viewBox="0 0 30 30"><g transform="scale(0.9375)"><circle cx="12" cy="12" r="9.6" fill="none" stroke="#4d78bd" stroke-width="3.3"/><path d="M22 22 L29.5 29.5" stroke="#4d78bd" stroke-width="6.5"/></g></svg>
<div class="t" style="top:1760px;font-size:23px;line-height:23px;color:#161616;right:1933px;text-align:right;">3.00</div>
<div class="t" style="top:1760px;font-size:23px;line-height:23px;color:#161616;right:1711px;text-align:right;">0.00</div>
<div class="r" style="left:1692px;top:1762px;width:26px;height:26px;background:#e2e2e2;border:1px solid #9a9a9a;"></div>
<div class="t" style="top:1760px;font-size:23px;line-height:23px;color:#161616;right:1326px;text-align:right;">1.00</div>
<div class="t" style="top:1759px;font-size:23px;line-height:23px;color:#161616;left:2075px;">17/02/21 12:25</div>
<svg class="r" style="left:2365px;top:1759px" width="30" height="28" viewBox="0 0 30 28"><rect x="0" y="4" width="30" height="24" fill="#4d78bd"/><rect x="5" y="0" width="3" height="6" fill="#4d78bd"/><rect x="22" y="0" width="3" height="6" fill="#4d78bd"/><rect x="3.5" y="9" width="3.2" height="5.5" fill="#fff"/><rect x="9.7" y="9" width="3.2" height="5.5" fill="#fff"/><rect x="15.9" y="9" width="3.2" height="5.5" fill="#fff"/><rect x="22.1" y="9" width="3.2" height="5.5" fill="#fff"/><rect x="3.5" y="17" width="3.2" height="5.5" fill="#fff"/><rect x="9.7" y="17" width="3.2" height="5.5" fill="#fff"/><rect x="15.9" y="17" width="3.2" height="5.5" fill="#fff"/><rect x="22.1" y="17" width="3.2" height="5.5" fill="#fff"/><circle cx="23" cy="21" r="6" fill="#fff"/><circle cx="23" cy="21" r="4.5" fill="#4d78bd"/><path d="M20.5 21 L22.5 23 L25.5 19.5" fill="none" stroke="#fff" stroke-width="1.5"/></svg>
<div class="r" style="left:2440px;top:1761px;width:28px;height:28px;background:#9a9a9a;"></div>
<svg class="r" style="left:2440px;top:1761px" width="28" height="28" viewBox="0 0 28 28"><path d="M6 14 L11.5 19.5 L22 9" fill="none" stroke="#fff" stroke-width="3.4"/></svg>
<svg class="r" style="left:3003px;top:1761px" width="30" height="28" viewBox="0 0 30 28"><rect x="0" y="4" width="30" height="24" fill="#4d78bd"/><rect x="5" y="0" width="3" height="6" fill="#4d78bd"/><rect x="22" y="0" width="3" height="6" fill="#4d78bd"/><rect x="3.5" y="9" width="3.2" height="5.5" fill="#fff"/><rect x="9.7" y="9" width="3.2" height="5.5" fill="#fff"/><rect x="15.9" y="9" width="3.2" height="5.5" fill="#fff"/><rect x="22.1" y="9" width="3.2" height="5.5" fill="#fff"/><rect x="3.5" y="17" width="3.2" height="5.5" fill="#fff"/><rect x="9.7" y="17" width="3.2" height="5.5" fill="#fff"/><rect x="15.9" y="17" width="3.2" height="5.5" fill="#fff"/><rect x="22.1" y="17" width="3.2" height="5.5" fill="#fff"/></svg>
<svg class="r" style="left:3077px;top:1756px" width="22" height="29" viewBox="0 0 22 29"><rect x="6" y="0" width="10" height="2.5" fill="#4d78bd"/><path d="M0 5 H22 V8.5 H20.5 V29 H1.5 V8.5 H0 Z" fill="#4d78bd"/><rect x="6" y="10" width="2" height="16" fill="#e0eff7"/><rect x="10" y="10" width="2" height="16" fill="#e0eff7"/><rect x="14" y="10" width="2" height="16" fill="#e0eff7"/></svg>
<div class="r" style="left:498px;top:1824px;width:149px;height:58px;background:#4a78bc;"></div>
<div class="t" style="top:1842px;font-size:24px;line-height:24px;color:#fff;left:72px;width:1000px;text-align:center;">New Row</div>
</body></html>
